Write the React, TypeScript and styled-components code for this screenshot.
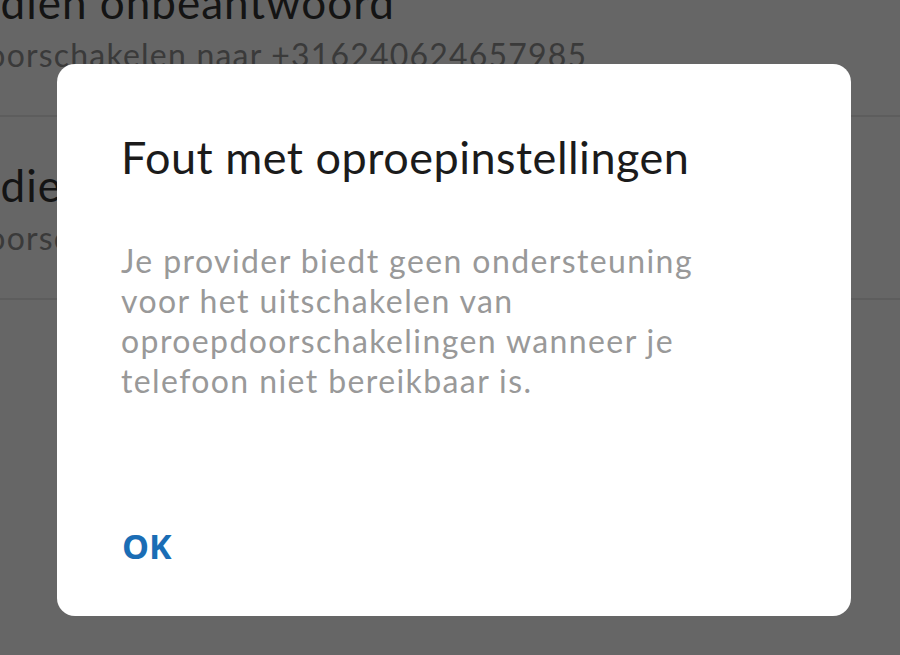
import React from "react";
import styled, { createGlobalStyle } from "styled-components";

const GlobalStyle = createGlobalStyle`
  html, body {
    margin: 0;
    padding: 0;
    background: #666666;
  }
  body {
    font-family: Lato, "Noto Sans", "Liberation Sans", sans-serif;
  }
`;

const Screen = styled.div`
  position: relative;
  width: 900px;
  height: 655px;
  overflow: hidden;
  background: #666666;
`;

const SettingsList = styled.div`
  display: flex;
  flex-direction: column;
  margin-top: -66px;
  margin-left: -38px;
`;

const SettingsItem = styled.div`
  display: flex;
  flex-direction: column;
  padding: 44px 0 40px;
  border-bottom: 2px solid #5d5d5d;
`;

const ItemTitle = styled.div`
  font-size: 44px;
  line-height: 48px;
  letter-spacing: 1px;
  color: #141414;
  white-space: nowrap;
`;

const ItemSummary = styled.div`
  margin-top: 9px;
  font-size: 32px;
  line-height: 40px;
  letter-spacing: 1.2px;
  color: #3a3a3a;
  white-space: nowrap;
`;

const Scrim = styled.div`
  position: absolute;
  inset: 0;
  padding: 64px 0 0 57px;
  box-sizing: border-box;
`;

const Dialog = styled.div`
  width: 794px;
  height: 552px;
  background: #ffffff;
  border-radius: 18px;
  box-sizing: border-box;
  padding: 0 64px;
  display: flex;
  flex-direction: column;
`;

const DialogTitle = styled.h2`
  margin: 67px 0 0;
  font-family: Lato, "Noto Sans", sans-serif;
  font-weight: 400;
  font-size: 45px;
  line-height: 52px;
  letter-spacing: 0.5px;
  color: #1b1b1b;
`;

const DialogMessage = styled.p`
  margin: 58px 0 0;
  font-size: 32px;
  line-height: 40px;
  letter-spacing: 1.4px;
  color: #999999;
  max-width: 610px;
`;

const Actions = styled.div`
  margin-top: auto;
  padding-bottom: 50px;
  display: flex;
`;

const TextButton = styled.button`
  border: none;
  background: none;
  padding: 0;
  margin-left: 1px;
  font-family: "Open Sans", Roboto, "Liberation Sans", sans-serif;
  font-weight: 700;
  font-size: 34px;
  line-height: 40px;
  color: #1a6db5;
  cursor: pointer;
`;

export default function App() {
  return (
    <>
      <GlobalStyle />
      <Screen>
        <SettingsList>
          <SettingsItem>
            <ItemTitle>Indien onbeantwoord</ItemTitle>
            <ItemSummary>Doorschakelen naar +316240624657985</ItemSummary>
          </SettingsItem>
          <SettingsItem>
            <ItemTitle>Indien niet bereikbaar</ItemTitle>
            <ItemSummary>Doorschakelen naar +316240624657985</ItemSummary>
          </SettingsItem>
        </SettingsList>
        <Scrim>
          <Dialog>
            <DialogTitle>Fout met oproepinstellingen</DialogTitle>
            <DialogMessage>
              Je provider biedt geen ondersteuning voor het uitschakelen van
              oproepdoorschakelingen wanneer je telefoon niet bereikbaar is.
            </DialogMessage>
            <Actions>
              <TextButton>OK</TextButton>
            </Actions>
          </Dialog>
        </Scrim>
      </Screen>
    </>
  );
}
